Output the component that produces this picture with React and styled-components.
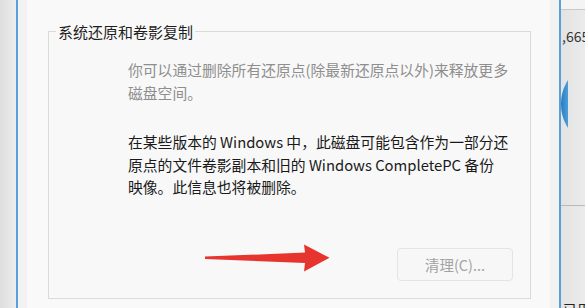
import React from 'react'
import styled, { createGlobalStyle } from 'styled-components'

const GlobalStyle = createGlobalStyle`
    html, body {
        margin: 0;
        padding: 0;
        background: #ececec;
        overflow: hidden;
    }
    #root {
        height: 308px;
    }
`;

const Screen = styled.div`
    display: flex;
    height: 308px;
    font-family: "Noto Sans CJK SC", "Noto Sans", sans-serif;
`;

const Backdrop = styled.div`
    width: 16px;
    flex-shrink: 0;
    background: linear-gradient(to right, #dedede, #ededed);
`;

const Window = styled.div`
    width: 545px;
    box-sizing: border-box;
    flex-shrink: 0;
    display: flex;
    background: #f2f2f2;
    border-left: 2px solid #5c9fd8;
    border-right: 2px solid #5c9fd8;
    padding: 0 9px;
`;

const Panel = styled.div`
    flex: 1;
    background: #f9f9f9;
    padding: 20px 19px 0 21px;
`;

const Group = styled.fieldset`
    margin: 0;
    height: 279px;
    box-sizing: border-box;
    border: 1px solid #dadada;
    padding: 0 17px 17px 7px;
    display: flex;
    flex-direction: column;
    background: #f8f8f8;
`;

const Caption = styled.legend`
    padding: 2px 2px 0 2px;
    font-size: 15px;
    line-height: 20px;
    color: #1e1e1e;
`;

const Body = styled.div`
    flex: 1;
    display: flex;
    flex-direction: column;
    padding: 17px 0 0 72px;
`;

const Note = styled.p`
    margin: ${p => p.$gap || 0}px 0 0 0;
    font-size: 14.8px;
    line-height: 22.5px;
    color: ${p => (p.$muted ? '#8e8e8e' : '#1a1a1a')};
    white-space: nowrap;
`;

const Actions = styled.div`
    margin-top: auto;
    display: flex;
    justify-content: flex-end;
    align-items: flex-start;
`;

const Pointer = styled.svg`
    margin-top: -5px;
    margin-right: 66px;
    flex-shrink: 0;
`;

const CleanButton = styled.button`
    width: 116px;
    height: 33px;
    border: 1px solid #e4e4e4;
    border-radius: 4px;
    background: #f7f7f7;
    color: #a3a3a3;
    font-family: inherit;
    font-size: 14.5px;
    padding: 0;
`;

const SidePane = styled.div`
    flex: 1;
    overflow: hidden;
    background: linear-gradient(to right, #e3e3e3, #ebebeb);
    display: flex;
    flex-direction: column;
`;

const PaneHead = styled.div`
    height: 9px;
    background: #f4f4f4;
    border-bottom: 1px solid #c9c9c9;
    flex-shrink: 0;
`;

const PaneValue = styled.div`
    padding: 16px 0 0 1px;
    font-size: 14px;
    line-height: 20px;
    color: #333;
    white-space: nowrap;
`;

const PaneChart = styled.svg`
    display: block;
    margin-top: 34px;
    flex-shrink: 0;
`;

const PaneRule = styled.div`
    margin-top: 77px;
    border-top: 1px solid #b9b9b9;
    height: 95px;
    flex-shrink: 0;
`;

const PaneFoot = styled.div`
    padding-left: 2px;
    font-size: 14px;
    line-height: 16px;
    color: #222;
    white-space: nowrap;
`;

function App() {
    return (
        <Screen>
            <GlobalStyle />
            <Backdrop />
            <Window>
                <Panel>
                    <Group>
                        <Caption>系统还原和卷影复制</Caption>
                        <Body>
                            <Note $muted>
                                你可以通过删除所有还原点(除最新还原点以外)来释放更多<br />
                                磁盘空间。
                            </Note>
                            <Note $gap={27}>
                                在某些版本的 Windows 中，此磁盘可能包含作为一部分还<br />
                                原点的文件卷影副本和旧的 Windows CompletePC 备份<br />
                                映像。此信息也将被删除。
                            </Note>
                            <Actions>
                                <Pointer width="126" height="30" viewBox="0 0 126 30">
                                    <path d="M0 13.6 L100 9.6 L99 1.5 L124.5 14.8 L99 28.5 L100 20 L0 16 Z" fill="#e6342f" />
                                </Pointer>
                                <CleanButton>清理(C)...</CleanButton>
                            </Actions>
                        </Body>
                    </Group>
                </Panel>
            </Window>
            <SidePane>
                <PaneHead />
                <PaneValue>,665</PaneValue>
                <PaneChart width="24" height="48" viewBox="0 0 24 48">
                    <defs>
                        <linearGradient id="pie" x1="0" y1="0" x2="1" y2="0">
                            <stop offset="0" stopColor="#2a7dbf" />
                            <stop offset="1" stopColor="#4a9fdb" />
                        </linearGradient>
                    </defs>
                    <path d="M7 0 C2 8 0 16 0 24 C0 32 2 40 7 48 L7 0 Z" fill="url(#pie)" />
                </PaneChart>
                <PaneRule />
                <PaneFoot>已用空间</PaneFoot>
            </SidePane>
        </Screen>
    )
}

export default App
